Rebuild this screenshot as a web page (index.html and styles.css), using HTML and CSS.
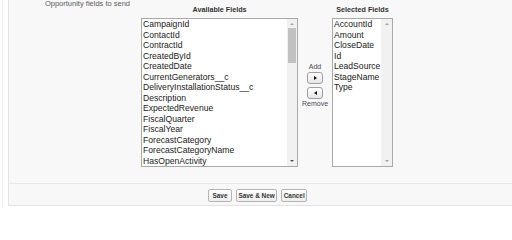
FILE: index.html
```html
<!DOCTYPE html>
<html>
<head>
<meta charset="utf-8">
<link rel="stylesheet" href="styles.css">
</head>
<body>
<div class="page">
  <div class="frame">
    <div class="panel">
      <div class="main">
        <div class="label-cell">Opportunity fields to send</div>
        <div class="duel">
          <div class="col col-avail">
            <div class="col-head">Available Fields</div>
            <div class="box box-avail">
              <div class="items">
                <div>CampaignId</div>
                <div>ContactId</div>
                <div>ContractId</div>
                <div>CreatedById</div>
                <div>CreatedDate</div>
                <div>CurrentGenerators__c</div>
                <div>DeliveryInstallationStatus__c</div>
                <div>Description</div>
                <div>ExpectedRevenue</div>
                <div>FiscalQuarter</div>
                <div>FiscalYear</div>
                <div>ForecastCategory</div>
                <div>ForecastCategoryName</div>
                <div>HasOpenActivity</div>
              </div>
              <div class="sbar">
                <span class="arr up dim"></span>
                <span class="thumb"></span>
                <span class="fill"></span>
                <span class="arr down"></span>
              </div>
            </div>
          </div>
          <div class="col col-mid">
            <div class="mid-label">Add</div>
            <button class="arrow-btn" type="button"><span class="tri tri-right"></span></button>
            <button class="arrow-btn btn-remove" type="button"><span class="tri tri-left"></span></button>
            <div class="mid-label">Remove</div>
          </div>
          <div class="col col-sel">
            <div class="col-head">Selected Fields</div>
            <div class="box box-sel">
              <div class="items">
                <div>AccountId</div>
                <div>Amount</div>
                <div>CloseDate</div>
                <div>Id</div>
                <div>LeadSource</div>
                <div>StageName</div>
                <div>Type</div>
              </div>
              <div class="sbar">
                <span class="arr up dim"></span>
                <span class="fill"></span>
                <span class="arr down dim"></span>
              </div>
            </div>
          </div>
        </div>
      </div>
      <div class="footer">
        <button class="btn" type="button">Save</button>
        <button class="btn" type="button">Save &amp; New</button>
        <button class="btn" type="button">Cancel</button>
      </div>
    </div>
  </div>
</div>
</body>
</html>
```

FILE: styles.css
```css
html, body {
  margin: 0;
  padding: 0;
  background: #ffffff;
  font-family: "Liberation Sans", Arial, sans-serif;
}

.page {
  height: 208px;
  padding-left: 2px;
  box-sizing: border-box;
}

.frame {
  border-left: 1px solid #ececec;
  padding-left: 5px;
  height: 208px;
  box-sizing: border-box;
}

.panel {
  background: #f8f8f8;
  border-left: 1px solid #e4e4e4;
  border-bottom: 1px solid #e4e4e4;
  height: 206px;
  box-sizing: border-box;
  display: flex;
  flex-direction: column;
}

.main {
  display: flex;
  height: 183px;
  flex: none;
}

.label-cell {
  width: 132px;
  box-sizing: border-box;
  padding-right: 11px;
  text-align: right;
  font-size: 7.5px;
  line-height: 8px;
  color: #5a5a5a;
  padding-top: 0;
}

.duel {
  display: grid;
  grid-template-columns: 157px 34px 61px;
  padding-top: 4px;
}

.col {
  display: flex;
  flex-direction: column;
}

.col-head {
  font-size: 7.2px;
  font-weight: bold;
  color: #333;
  line-height: 12px;
  height: 12px;
  text-align: center;
  margin-bottom: 2px;
}

.box {
  height: 149px;
  box-sizing: border-box;
  border: 1px solid #a9a9a9;
  background: #ffffff;
  display: flex;
}

.items {
  flex: 1;
  padding-left: 1px;
  padding-top: 0;
  font-size: 8.6px;
  line-height: 10.5px;
  color: #1a1a1a;
  white-space: nowrap;
  overflow: hidden;
}

.sbar {
  width: 10px;
  flex: none;
  background: #f1f1f1;
  display: flex;
  flex-direction: column;
  align-items: center;
}

.box-sel .sbar {
  width: 11px;
}

.arr {
  width: 0;
  height: 0;
  border-left: 2px solid transparent;
  border-right: 2px solid transparent;
  margin: 4px 0;
}

.arr.up {
  border-bottom: 2px solid #505050;
}

.arr.down {
  border-top: 2px solid #505050;
}

.arr.up.dim {
  border-bottom-color: #a3a3a3;
}

.arr.down.dim {
  border-top-color: #a3a3a3;
}

.thumb {
  width: 8px;
  height: 35px;
  background: #c1c1c1;
  margin-top: -1px;
}

.fill {
  flex: 1;
}

.col-mid {
  align-items: center;
  padding-top: 59px;
}

.mid-label {
  font-size: 7px;
  line-height: 8px;
  color: #4a4a56;
}

.arrow-btn {
  width: 16px;
  height: 12px;
  margin: 1px 0 0;
  padding: 0;
  border: 1px solid #a0a0a0;
  border-radius: 3px;
  background: linear-gradient(#ffffff, #e6e6e6);
  display: flex;
  align-items: center;
  justify-content: center;
}

.btn-remove {
  margin-top: 3px;
  margin-bottom: 1px;
}

.tri {
  width: 0;
  height: 0;
  border-top: 2.5px solid transparent;
  border-bottom: 2.5px solid transparent;
}

.tri-right {
  border-left: 3px solid #111;
}

.tri-left {
  border-right: 3px solid #111;
}

.footer {
  flex: 1;
  border-top: 1px solid #e8e8e8;
  display: flex;
  align-items: flex-start;
  gap: 4px;
  padding-top: 5px;
  padding-left: 199px;
  box-sizing: border-box;
}

.btn {
  height: 13px;
  min-width: 24px;
  padding: 0 1.5px;
  border: 1px solid #b5b5b5;
  border-radius: 2px;
  background: linear-gradient(#ffffff, #eeeeee);
  font-family: "Liberation Sans", Arial, sans-serif;
  font-size: 6.4px;
  font-weight: bold;
  color: #333;
  line-height: 11px;
  box-sizing: border-box;
}
```
